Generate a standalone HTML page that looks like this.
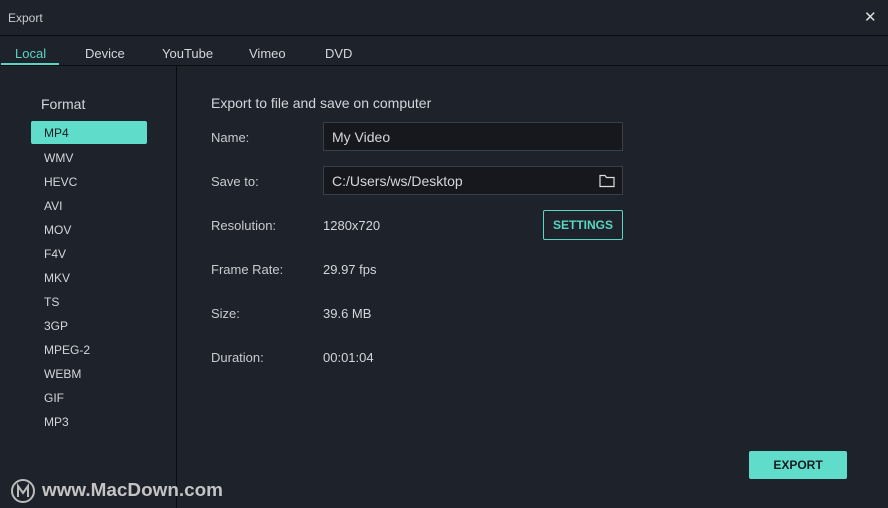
<!DOCTYPE html><html><head><style>
body{margin:0;width:888px;height:508px;background:#1e222a;font-family:"Liberation Sans",sans-serif;color:#d4d6da;position:relative;overflow:hidden;font-size:13px}
.a{position:absolute;white-space:nowrap}
.l{color:#c8cacd}
.inp{position:absolute;left:323px;width:300px;height:29px;background:#16181d;border:1px solid #3a3e46;box-sizing:border-box}
</style></head><body>
<div class="a" style="left:0;top:0;width:888px;height:35px;border-bottom:1px solid #0b0c0f"></div>
<div class="a" style="left:8px;top:11px;font-size:12px;color:#c9cbce">Export</div>
<div class="a" style="left:864px;top:8px;font-size:15px;color:#ddd">✕</div>
<div class="a" style="left:0;top:65px;width:888px;height:1px;background:#0b0c0f"></div>
<div class="a" style="left:1px;top:63px;width:58px;height:2px;background:#5ad5c4"></div>
<div class="a" style="left:15px;top:46px;color:#5ad5c4">Local</div>
<div class="a" style="left:85px;top:46px">Device</div>
<div class="a" style="left:162px;top:46px">YouTube</div>
<div class="a" style="left:249px;top:46px">Vimeo</div>
<div class="a" style="left:325px;top:46px">DVD</div>
<div class="a" style="left:176px;top:66px;width:1px;height:442px;background:#0b0c0f"></div>
<div class="a" style="left:41px;top:96px;font-size:14px">Format</div>
<div class="a" style="left:31px;top:121px;width:116px;height:23px;background:#5fdcca;border-radius:2px"></div>
<div class="a" style="left:44px;top:126px;font-size:12px;color:#1a1d22">MP4</div>
<div class="a" style="left:44px;top:146px;font-size:12px;line-height:24px">WMV<br>HEVC<br>AVI<br>MOV<br>F4V<br>MKV<br>TS<br>3GP<br>MPEG-2<br>WEBM<br>GIF<br>MP3</div>
<div class="a" style="left:211px;top:95px;font-size:14px">Export to file and save on computer</div>
<div class="inp" style="top:122px"></div><div class="inp" style="top:166px"></div>
<div class="a l" style="left:211px;top:130px">Name:</div><div class="a" style="left:332px;top:129px;font-size:14px">My Video</div>
<div class="a l" style="left:211px;top:174px">Save to:</div><div class="a" style="left:332px;top:173px;font-size:14px">C:/Users/ws/Desktop</div>
<svg class="a" style="left:599px;top:174px" width="16" height="14"><path d="M1 1.5h5l1.5 2H15v9H1z" fill="none" stroke="#ddd" stroke-width="1.2"/></svg>
<div class="a l" style="left:211px;top:218px">Resolution:</div><div class="a" style="left:323px;top:218px">1280x720</div>
<div class="a" style="left:543px;top:210px;width:80px;height:30px;border:1px solid #5ad5c4;border-radius:2px;box-sizing:border-box;color:#5ad5c4;font-size:12px;font-weight:bold;text-align:center;line-height:28px">SETTINGS</div>
<div class="a l" style="left:211px;top:262px">Frame Rate:</div><div class="a" style="left:323px;top:262px">29.97 fps</div>
<div class="a l" style="left:211px;top:306px">Size:</div><div class="a" style="left:323px;top:306px">39.6 MB</div>
<div class="a l" style="left:211px;top:350px">Duration:</div><div class="a" style="left:323px;top:350px">00:01:04</div>
<div class="a" style="left:749px;top:451px;width:98px;height:28px;background:#5fdcca;border-radius:2px;color:#1a1d22;font-size:12px;font-weight:bold;text-align:center;line-height:28px">EXPORT</div>
<svg class="a" style="left:10px;top:478px" width="26" height="26"><circle cx="13" cy="13" r="11" fill="none" stroke="#bbb" stroke-width="2"/><path d="M8 19V8l5 7 5-7v11" fill="none" stroke="#bbb" stroke-width="2"/></svg>
<div class="a" style="left:42px;top:480px;font-size:18px;font-weight:bold;color:#c4c4c4;transform:scaleX(1.05);transform-origin:left">www.MacDown.com</div>
</body></html>
